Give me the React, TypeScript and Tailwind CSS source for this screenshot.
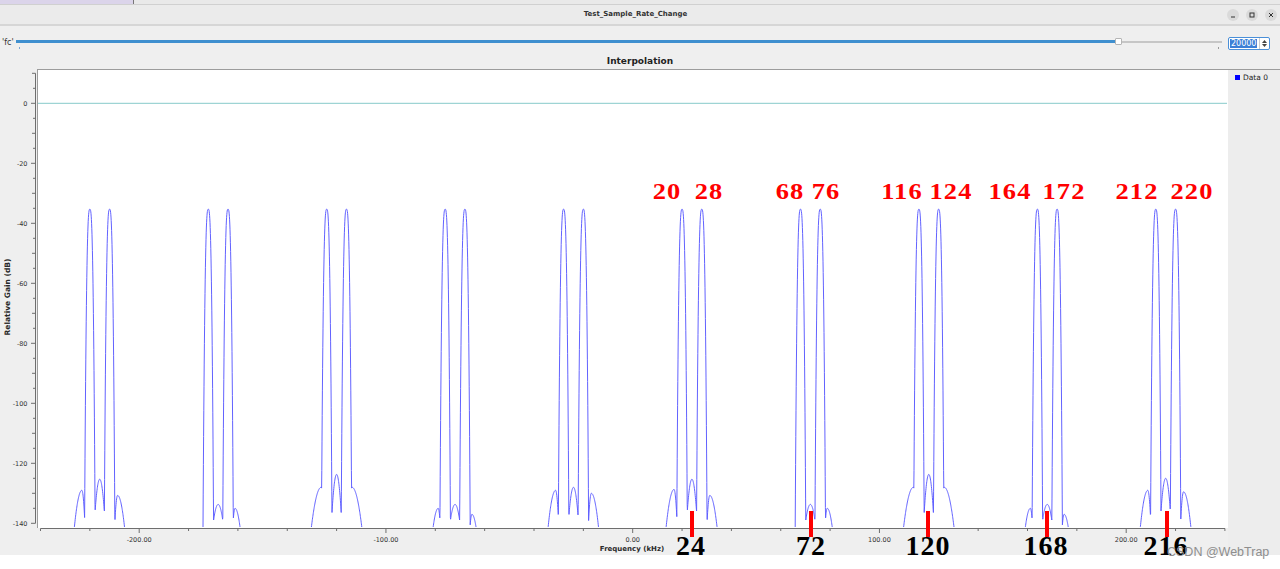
import React from 'react';

// plot scale (svg local coords, svg top = page y 69)
const X0 = 632.7;
const SX = 2.4675;
const Y0 = 34.3;
const SY = 3;

interface Pair {
  c: number;
  L: number;
  M: number;
  R: number;
  off: number;
  aO: number;
  aM: number;
}

const pairs: Pair[] = [
  { c: -216, L: -129, M: -125.3, R: -130.7, off: 8, aO: 0.22, aM: 0.5 },
  { c: -168, L: -160, M: -133.7, R: -135, off: 7, aO: 0.25, aM: 0.25 },
  { c: -120, L: -128, M: -123.7, R: -128, off: 5.6, aO: 0.14, aM: 0.6 },
  { c: -72, L: -135, M: -133.7, R: -137, off: 7, aO: 0.25, aM: 0.25 },
  { c: -24, L: -129, M: -128, R: -130, off: 8, aO: 0.22, aM: 0.45 },
  { c: 24, L: -128.7, M: -125.3, R: -130.7, off: 8, aO: 0.2, aM: 0.5 },
  { c: 72, L: -160, M: -133.7, R: -135, off: 7, aO: 0.25, aM: 0.25 },
  { c: 120, L: -128, M: -123.7, R: -128, off: 5.6, aO: 0.14, aM: 0.6 },
  { c: 168, L: -135, M: -133.7, R: -137, off: 7, aO: 0.25, aM: 0.25 },
  { c: 216, L: -129, M: -125, R: -129.5, off: 8, aO: 0.22, aM: 0.5 },
];

const gainAt = (x: number) => {
  let g = -200;
  for (const p of pairs) {
    const xc = X0 + p.c * SX;
    if (Math.abs(x - xc) > 45) continue;
    const p1 = xc - 4 * SX;
    const p2 = xc + 4 * SX;
    const lobe1 = -35.3 - Math.pow(Math.abs(x - p1), 2.8);
    const lobe2 = -35.3 - Math.pow(Math.abs(x - p2), 2.8);
    const mid = p.M - p.aM * (x - xc) * (x - xc);
    const hl = p1 - p.off;
    const hr = p2 + p.off;
    const left = x <= hl ? p.L - p.aO * (x - hl) ** 2 : p.L - 1.2 * (x - hl) ** 2;
    const right = x >= hr ? p.R - p.aO * (x - hr) ** 2 : p.R - 1.2 * (x - hr) ** 2;
    g = Math.max(g, lobe1, lobe2, mid, left, right);
  }
  return g;
};

const buildPath = () => {
  const pts: string[] = [];
  for (let x = 38; x <= 1227; x += 0.2) {
    const g = Math.max(gainAt(x), -150);
    const y = Y0 - SY * g;
    pts.push(`${pts.length ? 'L' : 'M'}${x.toFixed(2)},${y.toFixed(2)}`);
  }
  return pts.join('');
};

const yTicks = Array.from({ length: 31 }, (_, i) => 10 - i * 5);
const xTicks = Array.from({ length: 25 }, (_, i) => -240 + i * 20);

function Chart() {
  const path = buildPath();
  return (
    <svg width={1228} height={486} className="block shrink-0">
      <defs>
        <clipPath id="canvas">
          <rect x={38} y={1} width={1189} height={457} />
        </clipPath>
      </defs>
      <rect x={37} y={0} width={1191} height={459} fill="#ffffff" />
      <line x1={37.5} y1={0} x2={37.5} y2={459} stroke="#9c9c9c" />
      <line x1={37} y1={0.5} x2={1228} y2={0.5} stroke="#9c9c9c" />

      {/* 0 dB marker */}
      <line x1={38} y1={Y0} x2={1227} y2={Y0} stroke="#86caca" strokeWidth={1} />

      <path d={path} fill="none" stroke="#5a5aff" strokeWidth={0.95} clipPath="url(#canvas)" />

      {/* y axis */}
      <line x1={35.5} y1={Y0 - 30} x2={35.5} y2={Y0 + 420} stroke="#6e6e6e" />
      {yTicks.map(v => {
        const y = Y0 - SY * v;
        const len = v % 20 === 0 ? 4.5 : v % 10 === 0 ? 3.5 : 2.5;
        return <line key={v} x1={35.5 - len} y1={y} x2={35.5} y2={y} stroke="#6e6e6e" />;
      })}
      {yTicks
        .filter(v => v % 20 === 0)
        .map(v => (
          <text key={v} x={27.5} y={Y0 - SY * v + 2.3} fontSize={6.5} textAnchor="end" fill="#333">
            {v}
          </text>
        ))}
      <text
        transform={`translate(10,${297 - 69}) rotate(-90)`}
        fontSize={7.5}
        fontWeight="bold"
        textAnchor="middle"
        fill="#2a2a2a"
      >
        Relative Gain (dB)
      </text>

      {/* x axis */}
      <line x1={40.5} y1={459.5} x2={1225} y2={459.5} stroke="#6e6e6e" strokeWidth={1.2} />
      {xTicks.map(f => {
        const x = X0 + SX * f;
        const len = f % 100 === 0 ? 4.5 : 2.5;
        return <line key={f} x1={x} y1={459.5} x2={x} y2={459.5 + len} stroke="#6e6e6e" />;
      })}
      {[-200, -100, 0, 100, 200].map(f => (
        <text key={f} x={X0 + SX * f} y={472.7} fontSize={6.5} textAnchor="middle" fill="#333">
          {f.toFixed(2)}
        </text>
      ))}
      <text x={632} y={481.7} fontSize={7} fontWeight="bold" textAnchor="middle" fill="#2a2a2a">
        Frequency (kHz)
      </text>
    </svg>
  );
}

const redLabels = [
  { t: '20', cls: 'left-[627px]' },
  { t: '28', cls: 'left-[669px]' },
  { t: '68', cls: 'left-[750px]' },
  { t: '76', cls: 'left-[786px]' },
  { t: '116', cls: 'left-[862px]' },
  { t: '124', cls: 'left-[911px]' },
  { t: '164', cls: 'left-[970px]' },
  { t: '172', cls: 'left-[1024px]' },
  { t: '212', cls: 'left-[1097px]' },
  { t: '220', cls: 'left-[1152px]' },
];

const blackLabels = [
  { t: '24', cls: 'left-[651px]', bar: 'left-[690px]' },
  { t: '72', cls: 'left-[771px]', bar: 'left-[809px]' },
  { t: '120', cls: 'left-[888px]', bar: 'left-[926px]' },
  { t: '168', cls: 'left-[1006px]', bar: 'left-[1045px]' },
  { t: '216', cls: 'left-[1126px]', bar: 'left-[1165px]' },
];

function WinButton({ kind }: { kind: 'min' | 'max' | 'close' }) {
  return (
    <div className="w-[12px] h-[12px] rounded-full bg-[#dadada] flex items-center justify-center">
      <svg width={8} height={8} viewBox="0 0 8 8">
        {kind === 'min' && <line x1={2} y1={6} x2={6} y2={6} stroke="#333" strokeWidth={1} />}
        {kind === 'max' && <rect x={2} y={2} width={4} height={4} fill="none" stroke="#333" strokeWidth={1} />}
        {kind === 'close' && (
          <path d="M2 2L6 6M6 2L2 6" stroke="#333" strokeWidth={1} />
        )}
      </svg>
    </div>
  );
}

export default function App() {
  return (
    <div className="relative w-[1280px] h-[569px] overflow-hidden bg-white font-['DejaVu_Sans',sans-serif] text-[#2e2e2e]">
      {/* strip of the window behind */}
      <div className="flex h-[5px] border-b border-[#d0d0d0]">
        <div className="w-[134px] bg-[#dbd4ea] border-r border-[#777]" />
        <div className="flex-1 bg-[#e9e9e9]" />
      </div>

      {/* window */}
      <div className="h-[550px] bg-[#efefef] flex flex-col">
        {/* title bar */}
        <div className="h-[21px] shrink-0 grid grid-cols-[1fr_auto_1fr] items-center bg-[#ebebeb] border-b-2 border-[#d6d6d6]">
          <div />
          <div className="text-[7px] font-bold text-[#333] pr-[9px]">Test_Sample_Rate_Change</div>
          <div className="flex justify-end gap-[7px] pr-[3px]">
            <WinButton kind="min" />
            <WinButton kind="max" />
            <WinButton kind="close" />
          </div>
        </div>

        {/* slider row */}
        <div className="h-[28px] shrink-0 flex items-start">
          <span className="w-[16px] pl-[2px] mt-[13px] text-[8px] leading-none text-[#333]">'fc'</span>
          <div className="relative w-[1206px] h-[14px] mt-[14px]">
            <div className="flex items-center h-[3px]">
              <div className="w-[1102px] h-[3px] bg-[#3f8fcf]" />
              <div className="flex-1 h-[2px] bg-[#c6c6c6]" />
            </div>
            <div className="absolute left-[1099px] top-[-2px] w-[7px] h-[7px] rounded-[1px] bg-white border border-[#b5b5b5]" />
            <div className="absolute left-[3px] top-[7px] w-[1px] h-[2px] bg-[#7aa6d6]" />
            <div className="absolute left-[1202px] top-[7px] w-[1px] h-[2px] bg-[#9a9a9a]" />
          </div>
          <div className="ml-[6px] mt-[11px] w-[42px] h-[13px] bg-white border border-[#4a8fd8] rounded-[2px] flex items-center">
            <span className="ml-[1px] px-[1px] h-[9px] flex items-center bg-[#3c7fd6] text-white text-[8px] leading-none">
              20000
            </span>
            <div className="ml-auto mr-[1px] w-[9px] h-[11px] border-l border-[#cfcfcf] flex flex-col items-center justify-center gap-[1px]">
              <svg width={5} height={3} viewBox="0 0 5 3"><path d="M0 3L2.5 0L5 3Z" fill="#444" /></svg>
              <svg width={5} height={3} viewBox="0 0 5 3"><path d="M0 0L2.5 3L5 0Z" fill="#444" /></svg>
            </div>
          </div>
        </div>

        {/* plot title */}
        <div className="h-[15px] shrink-0 flex items-center justify-center text-[9px] font-bold text-[#222]">
          Interpolation
        </div>

        {/* plot + legend */}
        <div className="flex flex-1">
          <Chart />
          <div className="flex-1 bg-[#ededed] border-t border-[#9c9c9c]">
            <div className="flex items-center gap-[3px] pl-[7px] pt-[4px]">
              <div className="w-[5px] h-[5px] bg-[#0000ff]" />
              <span className="text-[7.5px] leading-none text-[#222]">Data 0</span>
            </div>
          </div>
        </div>
      </div>

      {/* annotations */}
      {redLabels.map(l => (
        <div
          key={l.t}
          className={`absolute top-[180px] w-[80px] text-center text-[23px] leading-none font-bold text-[#ff0000] font-['Liberation_Serif',serif] tracking-[1px] scale-x-[1.15] ${l.cls}`}
        >
          {l.t}
        </div>
      ))}
      {blackLabels.map(l => (
        <React.Fragment key={l.t}>
          <div
            className={`absolute top-[532px] w-[80px] text-center text-[28px] leading-none font-bold text-black font-['Liberation_Serif',serif] tracking-[1px] ${l.cls}`}
          >
            {l.t}
          </div>
          <div className={`absolute top-[511px] w-[4px] h-[26px] bg-[#ff0000] ${l.bar}`} />
        </React.Fragment>
      ))}

      <div className="absolute left-[1167px] top-[546px] text-[12.5px] leading-none text-[#8e8e8e] font-['Liberation_Sans',sans-serif]">
        CSDN @WebTrap
      </div>
    </div>
  );
}
